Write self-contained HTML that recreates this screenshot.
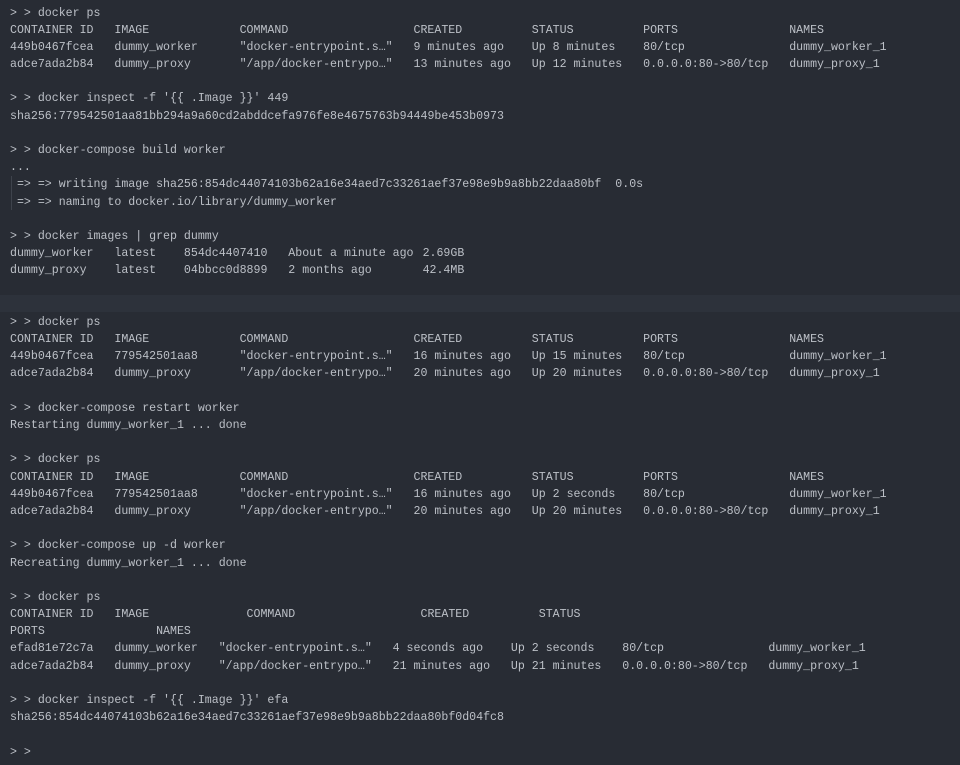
<!DOCTYPE html>
<html><head><meta charset="utf-8"><style>
html,body{margin:0;padding:0;background:#282c34;width:960px;height:765px;overflow:hidden}
#t{position:absolute;left:10px;top:4.5px;font-family:"Liberation Mono",monospace;font-size:11.6px;color:#bcc0c7;}
.l{position:relative;height:17.19px;line-height:17.19px;white-space:pre;width:950px}
.l i{font-style:normal;position:absolute;top:0}
.hl{position:absolute;left:0;top:295px;width:960px;height:17px;background:#2d323b}
.bar{position:absolute;left:11px;top:176px;width:1px;height:34px;background:#3e434c}
</style></head><body>
<div class="hl"></div><div class="bar"></div>
<div id="t">
<div class="l">&gt; &gt; docker ps</div>
<div class="l"><i style="left:0">CONTAINER ID</i><i style="left:15ch">IMAGE</i><i style="left:33ch">COMMAND</i><i style="left:58ch">CREATED</i><i style="left:75ch">STATUS</i><i style="left:91ch">PORTS</i><i style="left:112ch">NAMES</i></div>
<div class="l"><i style="left:0">449b0467fcea</i><i style="left:15ch">dummy_worker</i><i style="left:33ch">"docker-entrypoint.s…"</i><i style="left:58ch">9 minutes ago</i><i style="left:75ch">Up 8 minutes</i><i style="left:91ch">80/tcp</i><i style="left:112ch">dummy_worker_1</i></div>
<div class="l"><i style="left:0">adce7ada2b84</i><i style="left:15ch">dummy_proxy</i><i style="left:33ch">"/app/docker-entrypo…"</i><i style="left:58ch">13 minutes ago</i><i style="left:75ch">Up 12 minutes</i><i style="left:91ch">0.0.0.0:80-&gt;80/tcp</i><i style="left:112ch">dummy_proxy_1</i></div>
<div class="l"> </div>
<div class="l">&gt; &gt; docker inspect -f '{{ .Image }}' 449</div>
<div class="l">sha256:779542501aa81bb294a9a60cd2abddcefa976fe8e4675763b94449be453b0973</div>
<div class="l"> </div>
<div class="l">&gt; &gt; docker-compose build worker</div>
<div class="l">...</div>
<div class="l"> =&gt; =&gt; writing image sha256:854dc44074103b62a16e34aed7c33261aef37e98e9b9a8bb22daa80bf  0.0s</div>
<div class="l"> =&gt; =&gt; naming to docker.io/library/dummy_worker</div>
<div class="l"> </div>
<div class="l">&gt; &gt; docker images | grep dummy</div>
<div class="l"><i style="left:0">dummy_worker</i><i style="left:15ch">latest</i><i style="left:25ch">854dc4407410</i><i style="left:40ch">About a minute ago</i><i style="left:59.3ch">2.69GB</i></div>
<div class="l"><i style="left:0">dummy_proxy</i><i style="left:15ch">latest</i><i style="left:25ch">04bbcc0d8899</i><i style="left:40ch">2 months ago</i><i style="left:59.3ch">42.4MB</i></div>
<div class="l"> </div>
<div class="l"> </div>
<div class="l">&gt; &gt; docker ps</div>
<div class="l"><i style="left:0">CONTAINER ID</i><i style="left:15ch">IMAGE</i><i style="left:33ch">COMMAND</i><i style="left:58ch">CREATED</i><i style="left:75ch">STATUS</i><i style="left:91ch">PORTS</i><i style="left:112ch">NAMES</i></div>
<div class="l"><i style="left:0">449b0467fcea</i><i style="left:15ch">779542501aa8</i><i style="left:33ch">"docker-entrypoint.s…"</i><i style="left:58ch">16 minutes ago</i><i style="left:75ch">Up 15 minutes</i><i style="left:91ch">80/tcp</i><i style="left:112ch">dummy_worker_1</i></div>
<div class="l"><i style="left:0">adce7ada2b84</i><i style="left:15ch">dummy_proxy</i><i style="left:33ch">"/app/docker-entrypo…"</i><i style="left:58ch">20 minutes ago</i><i style="left:75ch">Up 20 minutes</i><i style="left:91ch">0.0.0.0:80-&gt;80/tcp</i><i style="left:112ch">dummy_proxy_1</i></div>
<div class="l"> </div>
<div class="l">&gt; &gt; docker-compose restart worker</div>
<div class="l">Restarting dummy_worker_1 ... done</div>
<div class="l"> </div>
<div class="l">&gt; &gt; docker ps</div>
<div class="l"><i style="left:0">CONTAINER ID</i><i style="left:15ch">IMAGE</i><i style="left:33ch">COMMAND</i><i style="left:58ch">CREATED</i><i style="left:75ch">STATUS</i><i style="left:91ch">PORTS</i><i style="left:112ch">NAMES</i></div>
<div class="l"><i style="left:0">449b0467fcea</i><i style="left:15ch">779542501aa8</i><i style="left:33ch">"docker-entrypoint.s…"</i><i style="left:58ch">16 minutes ago</i><i style="left:75ch">Up 2 seconds</i><i style="left:91ch">80/tcp</i><i style="left:112ch">dummy_worker_1</i></div>
<div class="l"><i style="left:0">adce7ada2b84</i><i style="left:15ch">dummy_proxy</i><i style="left:33ch">"/app/docker-entrypo…"</i><i style="left:58ch">20 minutes ago</i><i style="left:75ch">Up 20 minutes</i><i style="left:91ch">0.0.0.0:80-&gt;80/tcp</i><i style="left:112ch">dummy_proxy_1</i></div>
<div class="l"> </div>
<div class="l">&gt; &gt; docker-compose up -d worker</div>
<div class="l">Recreating dummy_worker_1 ... done</div>
<div class="l"> </div>
<div class="l">&gt; &gt; docker ps</div>
<div class="l"><i style="left:0">CONTAINER ID</i><i style="left:15ch">IMAGE</i><i style="left:34ch">COMMAND</i><i style="left:59ch">CREATED</i><i style="left:76ch">STATUS</i></div>
<div class="l"><i style="left:0">PORTS</i><i style="left:21ch">NAMES</i></div>
<div class="l"><i style="left:0">efad81e72c7a</i><i style="left:15ch">dummy_worker</i><i style="left:30ch">"docker-entrypoint.s…"</i><i style="left:55ch">4 seconds ago</i><i style="left:72ch">Up 2 seconds</i><i style="left:88ch">80/tcp</i><i style="left:109ch">dummy_worker_1</i></div>
<div class="l"><i style="left:0">adce7ada2b84</i><i style="left:15ch">dummy_proxy</i><i style="left:30ch">"/app/docker-entrypo…"</i><i style="left:55ch">21 minutes ago</i><i style="left:72ch">Up 21 minutes</i><i style="left:88ch">0.0.0.0:80-&gt;80/tcp</i><i style="left:109ch">dummy_proxy_1</i></div>
<div class="l"> </div>
<div class="l">&gt; &gt; docker inspect -f '{{ .Image }}' efa</div>
<div class="l">sha256:854dc44074103b62a16e34aed7c33261aef37e98e9b9a8bb22daa80bf0d04fc8</div>
<div class="l"> </div>
<div class="l">&gt; &gt;</div>
</div>
</body></html>
